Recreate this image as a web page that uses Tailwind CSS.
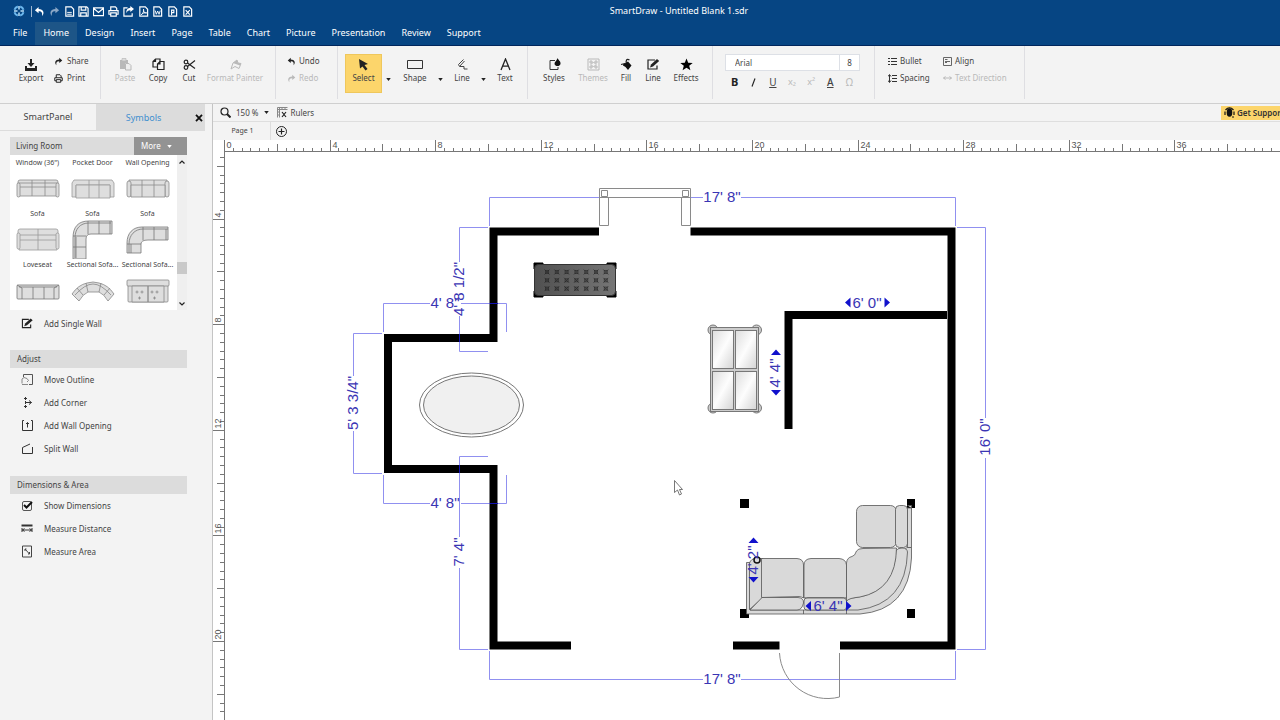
<!DOCTYPE html>
<html lang="en">
<head>
    <meta charset="UTF-8">
    <meta name="viewport" content="width=device-width, initial-scale=1.0">
    <title>SmartDraw - Untitled Blank 1.sdr</title>
    <script src="https://cdn.jsdelivr.net/npm/@tailwindcss/browser@4"></script>
</head>
<body class="flex h-screen flex-col overflow-hidden bg-[#f3f3f3] font-['Noto_Sans','Open_Sans',sans-serif] text-[8px] leading-3 text-[#444]">

    <!-- Shared icons -->
    <svg class="hidden">
        <symbol id="undo" viewBox="0 0 12 12"><path d="M5 1 L1 4.500 L5 8 V5.700 C8.500 5.600 9.300 7.500 8.800 11 C11.800 7.500 10.500 3.300 5 3.200Z" fill="currentColor"/></symbol>
        <symbol id="share" viewBox="0 0 12 12"><path d="M7 1 L11 4.500 L7 8 V5.700 C3.500 5.600 2.700 7.500 3.200 11 C.2 7.500 1.500 3.300 7 3.200Z" fill="currentColor"/></symbol>
        <symbol id="print" viewBox="0 0 12 12"><path d="M3 5V1h5l1.500 1.500V5M3 9H1V5h10v4H9M3 7.500h6V11H3z" fill="none" stroke="currentColor" stroke-width="1.300"/></symbol>
        <symbol id="doc" viewBox="0 0 12 12"><path d="M2 1h6l2.500 2.500V11H2z" fill="none" stroke="currentColor" stroke-width="1.300"/></symbol>
        <symbol id="edit" viewBox="0 0 14 12"><path d="M9 1.500H2v9h9V7" fill="none" stroke="currentColor" stroke-width="1.200"/><path d="M4 9l1-3 6-5.500 2.200 2L7 8z" fill="currentColor"/></symbol>
        <symbol id="caret" viewBox="0 0 6 4"><path d="M0 0h6L3 4z" fill="currentColor"/></symbol>
    </svg>

    <header class="border-b border-[#00265c] bg-[#064583] text-[9px] text-white">
        <div class="relative flex h-[22px] items-center pl-[13px]">
            <svg class="size-3" viewBox="0 0 12 12"><g fill="none" stroke="#6db8ee" stroke-width="2"><path d="M1.500 4.800A4.700 4.700 0 0 1 4.800 1.500"/><path d="M7.200 1.500A4.700 4.700 0 0 1 10.500 4.800"/><path d="M10.500 7.200A4.700 4.700 0 0 1 7.200 10.500"/><path d="M4.800 10.500A4.700 4.700 0 0 1 1.500 7.200"/></g><path d="M6 1v3.500M6 7.500V11M1 6h3.500M7.500 6H11" stroke="#b9def8" stroke-width="1.500"/></svg>
            <span class="ml-[6px] h-[11px] w-px bg-[#9db6d0]"></span>
            <div class="ml-[2px] flex w-[159px] justify-between">
                <button aria-label="Undo"><svg class="size-[11px]"><use href="#undo"/></svg></button>
                <button aria-label="Redo" class="text-[#8ba7c6]"><svg class="size-[11px]"><use href="#share"/></svg></button>
                <button aria-label="New"><svg class="size-[11px]" viewBox="0 0 12 12"><use href="#doc"/><path d="M3.500 7h5M3.500 9h5" stroke="#fff"/></svg></button>
                <button aria-label="Save"><svg class="size-[11px]" viewBox="0 0 12 12" fill="none" stroke="#fff" stroke-width="1.300"><path d="M1 1h8.500L11 2.500V11H1zM3 11V7.500h6V11M3.500 1v3.500h5V1"/></svg></button>
                <button aria-label="Mail"><svg class="size-[11px]" viewBox="0 0 12 12" fill="none" stroke="#fff" stroke-width="1.200"><path d="M.6 2h10.800v8.500H.6zM.6 2.500L6 7l5.400-4.500"/></svg></button>
                <button aria-label="Print"><svg class="size-[11px]"><use href="#print"/></svg></button>
                <button aria-label="Share"><svg class="size-[11px]" viewBox="0 0 12 12"><path d="M5 2H1v9h9V8" fill="none" stroke="#fff" stroke-width="1.300"/><path d="M8 0l4 3.200-4 3.300V4.500C5.500 4.500 4.500 5.500 3.500 8 3.500 4 5 2.200 8 2z" fill="#fff"/></svg></button>
                <button aria-label="Export PDF"><svg class="size-[11px]" viewBox="0 0 12 12"><use href="#doc"/><path d="M3.500 9.500C6 8 6.500 5 6 3.500 5.500 6 7 8 9.500 7.500 7 7 5 8 3.500 9.500" fill="none" stroke="#fff"/></svg></button>
                <button aria-label="Export Word"><svg class="size-[11px]" viewBox="0 0 12 12"><use href="#doc"/><path d="M3.500 5l1.200 4L6.200 5.500 7.700 9l1.300-4" fill="none" stroke="#fff"/></svg></button>
                <button aria-label="Export PowerPoint"><svg class="size-[11px]" viewBox="0 0 12 12"><use href="#doc"/><path d="M5 10V4.500h2.500v2.700H5" fill="none" stroke="#fff" stroke-width="1.200"/></svg></button>
                <button aria-label="Export Excel"><svg class="size-[11px]" viewBox="0 0 12 12"><use href="#doc"/><path d="M4 4.500l4.500 5M8.500 4.500L4 9.500" fill="none" stroke="#fff" stroke-width="1.200"/></svg></button>
            </div>
            <h1 class="pointer-events-none absolute inset-x-0 pl-[78px] text-center">SmartDraw - Untitled Blank 1.sdr</h1>
        </div>
        <nav class="flex h-[23px] items-stretch pl-[5px] leading-[22px]">
            <a href="#" class="px-2">File</a>
            <a href="#" class="bg-[#1d5587] px-2">Home</a>
            <a href="#" class="px-2">Design</a>
            <a href="#" class="px-2">Insert</a>
            <a href="#" class="px-2">Page</a>
            <a href="#" class="px-2">Table</a>
            <a href="#" class="px-2">Chart</a>
            <a href="#" class="px-2">Picture</a>
            <a href="#" class="px-2">Presentation</a>
            <a href="#" class="px-2">Review</a>
            <a href="#" class="px-2">Support</a>
        </nav>
    </header>

    <!-- Ribbon -->
    <div class="flex h-[58px] shrink-0 whitespace-nowrap border-b border-[#cfcfcf] pb-1">
        <div class="flex w-[101px] border-r border-[#dedee2]">
            <button class="ml-[14px] flex w-[34px] flex-col items-center gap-px pt-3"><svg class="h-[13px] w-3 text-[#222]" viewBox="0 0 12 13"><path d="M6 1v5M1 8v4h10V8" fill="none" stroke="currentColor" stroke-width="2"/><path d="M2.500 5h7L6 9z" fill="currentColor"/><path d="M1 10h10v2.500H1z" fill="currentColor"/></svg>Export</button>
            <div class="ml-[6px] flex flex-col gap-[5px] pt-[9px]">
                <button class="flex items-center gap-1"><svg class="size-[9px] text-[#222]"><use href="#share"/></svg>Share</button>
                <button class="flex items-center gap-1"><svg class="size-[9px] text-[#222]"><use href="#print"/></svg>Print</button>
            </div>
        </div>
        <div class="flex w-[175px] border-r border-[#dedee2] pl-[7px]">
            <button class="flex w-[34px] flex-col items-center gap-px pt-3 text-[#b9b9b9]"><svg class="size-[13px]" viewBox="0 0 13 13"><path d="M1 2h8v3H6v6H1z" fill="currentColor"/><path d="M3 .5h4V3H3z" fill="#ddd" stroke="currentColor" stroke-width=".7"/><path d="M6.500 5.500h3.500l2 2V12H6.500z" fill="#eee" stroke="currentColor"/></svg>Paste</button>
            <button class="flex w-8 flex-col items-center gap-px pt-3"><svg class="size-[13px] text-[#222]" viewBox="0 0 13 13" fill="#f3f3f3" stroke="currentColor" stroke-width="1.200"><path d="M3.500 1H8v8H1V3.500zM3.500 1v2.500H1"/><path d="M8 3.500h4v8H5.500V6zM8 3.500V6H5.500"/></svg>Copy</button>
            <button class="flex w-[30px] flex-col items-center gap-px pt-3"><svg class="size-[13px] text-[#222]" viewBox="0 0 13 13" fill="none" stroke="currentColor" stroke-width="1.200"><circle cx="3" cy="4" r="1.800"/><circle cx="3" cy="9.500" r="1.800"/><path d="M4.500 5L12 10.500M4.500 8.500L12 2.500"/></svg>Cut</button>
            <button class="flex w-[62px] flex-col items-center gap-px pt-3 text-[#b9b9b9]"><svg class="size-[13px]" viewBox="0 0 13 13"><path d="M2 11l2-6 4-3 1 3 3 .5-2 5-4-2z" fill="none" stroke="currentColor"/><path d="M4 5l4-3 1 3 3 .5-1 2z" fill="currentColor"/></svg>Format Painter</button>
        </div>
        <div class="flex w-[62px] flex-col items-start gap-[5px] border-r border-[#dedee2] pl-[11px] pt-[9px]">
            <button class="flex items-center gap-[3px]"><svg class="size-[9px] text-[#222]"><use href="#undo"/></svg>Undo</button>
            <button class="flex items-center gap-[3px] text-[#b9b9b9]"><svg class="size-[9px]"><use href="#share"/></svg>Redo</button>
        </div>
        <div class="flex w-[190px] items-start border-r border-[#dedee2] pl-[7px] pt-2">
            <button class="flex h-[39px] w-[37px] flex-col items-center gap-px border border-[#efc75c] bg-[#fcd56b] pt-[3px]"><svg class="size-[13px]" viewBox="0 0 13 13"><path d="M2 1l9 5-3.500 1 3 4-2 1.500-3-4-2.500 2z" fill="#222"/></svg>Select</button>
            <button aria-label="Select options" class="flex h-[39px] w-3 justify-center pt-6"><svg class="h-[3px] w-[5px] text-[#222]"><use href="#caret"/></svg></button>
            <button class="flex w-[42px] flex-col items-center gap-px pt-1"><svg class="h-[13px] w-4" viewBox="0 0 16 13"><path d="M.5 2.500h15v8H.5z" fill="none" stroke="#333"/></svg>Shape</button>
            <button aria-label="Shape options" class="flex h-[39px] w-[9px] justify-center pt-6"><svg class="h-[3px] w-[5px] text-[#222]"><use href="#caret"/></svg></button>
            <button class="flex w-[34px] flex-col items-center gap-px pt-1"><svg class="size-[13px]" viewBox="0 0 13 13"><path d="M7.500 1.500l-5 5 1 2 5-5.500M4 8.500h4v2.500h3.500" fill="none" stroke="#444"/></svg>Line</button>
            <button aria-label="Line options" class="flex h-[39px] w-[9px] justify-center pt-6"><svg class="h-[3px] w-[5px] text-[#222]"><use href="#caret"/></svg></button>
            <button class="flex w-[34px] flex-col items-center gap-px pt-1"><svg class="size-[13px]" viewBox="0 0 13 13"><path d="M2 12L6.500 1 11 12M3.600 8.200h5.800" fill="none" stroke="#222" stroke-width="1.300"/></svg>Text</button>
        </div>
        <div class="flex w-[185px] border-r border-[#dedee2] pl-[6px]">
            <button class="flex w-10 flex-col items-center gap-px pt-3"><svg class="size-[13px]" viewBox="0 0 13 13"><path d="M7 2.500H2v9h8V9" fill="none" stroke="#333"/><path d="M9.500 0C10 2 13 3 12.500 6 12 8.500 7.500 9 6.500 6 6.300 4 9 2.500 9.500 0" fill="#111"/></svg>Styles</button>
            <button class="flex w-[38px] flex-col items-center gap-px pt-3 text-[#b9b9b9]"><svg class="size-[13px]" viewBox="0 0 13 13" fill="none" stroke="currentColor"><path d="M1 1h11v11H1z"/><path d="M3 3h2v2H3zM8 3h2v2H8zM3 8h2v2H3zM8 8h2v2H8z"/><path d="M6.500 4L9 6.500 6.500 9 4 6.500z"/></svg>Themes</button>
            <button class="flex w-7 flex-col items-center gap-px pt-3"><svg class="size-[13px]" viewBox="0 0 13 13"><path d="M9.500 2C6.500 0 5.500 3 6.500 6M1 6.500l4-1" fill="none" stroke="#222" stroke-width="1.200"/><path d="M3 6.500l5-3 3.500 4L8 12 5.500 9 3 7.500z" fill="#111"/></svg>Fill</button>
            <button class="flex w-[26px] flex-col items-center gap-px pt-3"><svg class="h-[13px] w-[14px] text-[#222]"><use href="#edit"/></svg>Line</button>
            <button class="flex w-10 flex-col items-center gap-px pt-3"><svg class="size-[13px]" viewBox="0 0 13 13"><path d="M6.500.5l1.700 4.200 4.500.3-3.500 2.800L10.400 12.200 6.500 9.800 2.600 12.200l1.200-4.400L.3 5l4.500-.3z" fill="#000"/></svg>Effects</button>
        </div>
        <div class="w-[162px] border-r border-[#dedee2] pl-3 pt-2">
            <div class="flex">
                <input aria-label="Font" value="Arial" class="h-[17px] w-[115px] border border-[#dde0e6] bg-white px-[9px]">
                <input aria-label="Font size" value="8" class="-ml-px h-[17px] w-[21px] border border-[#dde0e6] bg-white text-center">
            </div>
            <div class="flex w-[134px] items-center pt-[5px] text-[10px] *:min-w-0 *:flex-1 *:text-center">
                <button class="text-[11px] font-bold text-[#222]">B</button>
                <button aria-label="Italic"><svg class="mx-auto size-[9px]" viewBox="0 0 9 9"><path d="M6 .5L3 8.500" stroke="#222" stroke-width="1.200"/></svg></button>
                <button class="underline">U</button>
                <button class="text-[9px] text-[#b9b9b9]">x₂</button>
                <button class="text-[9px] text-[#b9b9b9]">x²</button>
                <button class="font-medium underline">A</button>
                <button class="text-[#b9b9b9]">Ω</button>
            </div>
        </div>
        <div class="flex w-[150px] border-r border-[#dedee2] pl-[13px] pt-[9px]">
            <div class="flex w-[55px] flex-col items-start gap-[5px]">
                <button class="flex items-center gap-[3px]"><svg class="size-[9px]" viewBox="0 0 9 9"><path d="M0 1.500h2M3 1.500h6M0 4.500h2M3 4.500h6M0 7.500h2M3 7.500h6" stroke="#333"/></svg>Bullet</button>
                <button class="flex items-center gap-[3px]"><svg class="size-[9px]" viewBox="0 0 9 9"><path d="M4 1.500h5M4 4.500h5M4 7.500h5M1.500 1v7M0 2.500L1.500.5 3 2.500M0 6.500l1.500 2 1.500-2" fill="none" stroke="#333"/></svg>Spacing</button>
            </div>
            <div class="flex flex-col items-start gap-[5px]">
                <button class="flex items-center gap-[3px]"><svg class="size-[9px]" viewBox="0 0 9 9"><path d="M.5.500h8v8h-8zM2 2.500h2.500M2 4.500h5M2 5.500h2" fill="none" stroke="#666"/></svg>Align</button>
                <button class="flex items-center gap-[3px] text-[#b9b9b9]"><svg class="size-[9px]" viewBox="0 0 9 9"><path d="M.5 4h8M2.500 2.500L.5 4l2 1.500M6.500 2.500l2 1.500-2 1.500" fill="none" stroke="currentColor"/></svg>Text Direction</button>
            </div>
        </div>
    </div>

    <main class="flex min-h-0 flex-1">
        <!-- Side panel -->
        <aside class="w-[213px] shrink-0 border-r border-[#c4c4c4] pr-[7px]">
            <div class="flex h-[27px] text-[9px]">
                <button class="w-24 border-b border-[#dcdcdc]">SmartPanel</button>
                <button class="w-[95px] bg-[#dcdcdc] text-[#3f8fcf]">Symbols</button>
                <button aria-label="Close panel" class="flex flex-1 items-center bg-[#dcdcdc]"><svg class="ml-1 size-2" viewBox="0 0 8 8"><path d="M1 .8l6 6.400M7 .8L1 7.200" stroke="#111" stroke-width="1.800"/></svg></button>
            </div>
            <div class="mt-[6px] ml-[10px] w-[177px]">
                <div class="flex h-[18px] items-center bg-[#dcdcdc] pl-[6px]">
                    <span class="flex-1">Living Room</span>
                    <button class="flex h-[18px] w-[53px] items-center gap-[6px] bg-[#939393] pl-[7px] text-white">More <svg class="h-[3px] w-[5px]"><use href="#caret"/></svg></button>
                </div>
                <div class="flex h-[155px] bg-white">
                    <div class="grid w-[167px] auto-rows-min grid-cols-[55px_55px_55px] justify-items-center pt-[2px] text-[7px]">
                        <span class="h-3">Window (36")</span>
                        <span class="h-3">Pocket Door</span>
                        <span class="h-3">Wall Opening</span>
                        <svg class="h-[39px] w-[44px]" viewBox="0 0 44 39" fill="#dedede" stroke="#8a8a8a" stroke-width=".8"><rect x="2" y="11" width="40" height="8" rx="2"/><rect x="3" y="14" width="38" height="13"/><path d="M16 11v16M29 11v16M4 18h36"/><rect x="1" y="14" width="3" height="14" rx="1.500"/><rect x="40" y="14" width="3" height="14" rx="1.500"/></svg>
                        <svg class="h-[39px] w-[44px]" viewBox="0 0 44 39" fill="#dedede" stroke="#999" stroke-width=".8"><path d="M3 11h38l2 3v14h-4V16H5v12H1V14z"/><path d="M5 16h34v13H5zM18 11v18M28 11v18"/></svg>
                        <svg class="h-[39px] w-[44px]" viewBox="0 0 44 39" fill="#dedede" stroke="#8a8a8a" stroke-width=".8"><path d="M3 11h38v6H3z"/><rect x="1" y="12" width="4" height="16" rx="2"/><rect x="39" y="12" width="4" height="16" rx="2"/><path d="M5 16h34v12H5zM16 11v17M28 11v17"/></svg>
                        <span class="h-3">Sofa</span>
                        <span class="h-3">Sofa</span>
                        <span class="h-3">Sofa</span>
                        <svg class="h-[39px] w-[44px]" viewBox="0 0 44 39" fill="#dedede" stroke="#999" stroke-width=".8"><rect x="2" y="9" width="40" height="10" rx="2"/><path d="M3 15h38v15H3zM22 9v21M3 20h38"/><rect x="1" y="13" width="3" height="16" rx="1.500"/><rect x="40" y="13" width="3" height="16" rx="1.500"/></svg>
                        <svg class="h-[39px] w-[44px]" viewBox="0 0 44 39" fill="#dedede" stroke="#777" stroke-width=".8"><path d="M2 39V18C2 7 7 1 18 1h23v13H20q-5 0-5 5v20z"/><path d="M4 38V18C4 9 9 3 18 3h22M17 1v13M28 1v13M39 1v13M2 16h13M2 27h13M5 17v21" fill="none"/></svg>
                        <svg class="h-[39px] w-[44px]" viewBox="0 0 44 39" fill="#dedede" stroke="#777" stroke-width=".8"><path d="M1 33V23C1 13 7 7 16 7h26v13H22q-7 0-7 4v9z"/><path d="M3 33V24C3 15 9 9 17 9h25M17 7v13M28 7v13M40 9v11M1 24h14M5 24v9" fill="none"/></svg>
                        <span class="h-3">Loveseat</span>
                        <span class="h-3">Sectional Sofa...</span>
                        <span class="h-3">Sectional Sofa...</span>
                        <svg class="h-[39px] w-[44px]" viewBox="0 0 44 39" fill="#dedede" stroke="#777" stroke-width=".8"><rect x="1" y="14" width="42" height="14" rx="1"/><path d="M3 16h38M17 16v12M28 16v12M6 17v11M38 17v11M1 14l5 3M43 14l-5 3" fill="none"/></svg>
                        <svg class="h-[39px] w-[44px]" viewBox="0 0 44 39" fill="#dedede" stroke="#888" stroke-width=".8"><path d="M1 23Q7 14 16 12Q22 10 28 12Q37 14 43 23l-6 7Q33 23 28 21H17Q12 23 8 30z"/><path d="M4 24Q14 13 22 13Q30 13 40 24M17 21l-2-9M28 21l2-9M12 24l-6-7M33 24l6-7" fill="none"/></svg>
                        <svg class="h-[39px] w-[44px]" viewBox="0 0 44 39" fill="#dedede" stroke="#888" stroke-width=".8"><rect x="2" y="14" width="40" height="17" rx="1"/><rect x="1" y="9" width="42" height="6" rx="1"/><path d="M6 15h16v16H6zM22 15h16v16H22z"/><path d="M11 19.500v3M16 19.500v3M13.500 25.500v3M26 19.500v3M31 19.500v3M28.500 25.500v3M9.500 21h3M14.500 21h3M12 27h3M24.500 21h3M29.500 21h3M27 27h3"/></svg>
                    </div>
                    <div class="flex w-[10px] flex-col items-center bg-[#efefef] pt-[5px] pb-[4px]">
                        <svg class="h-1 w-[6px]" viewBox="0 0 6 4"><path d="M.5 3.500L3 1l2.500 2.500" fill="none" stroke="#222" stroke-width="1.200"/></svg>
                        <div class="mt-[98px] h-3 w-[10px] bg-[#c9c9c9]"></div>
                        <svg class="mt-auto h-1 w-[6px]" viewBox="0 0 6 4"><path d="M.5.500L3 3 5.500.5" fill="none" stroke="#222" stroke-width="1.200"/></svg>
                    </div>
                </div>
                <button class="mt-[2px] flex h-[23px] w-full items-center gap-[10px] pl-[10px]"><svg class="h-[11px] w-[14px] text-[#222]"><use href="#edit"/></svg>Add Single Wall</button>

                <h2 class="mt-[15px] h-[18px] bg-[#dcdcdc] pt-[3px] pl-[7px]">Adjust</h2>
                <button class="flex h-[23px] w-full items-center gap-[10px] pl-[10px]"><svg class="h-[13px] w-[14px]" viewBox="0 0 14 13" fill="none" stroke="#555"><path d="M3.500 4V1.500h9v10H9"/><path d="M2 11.500h6M2 10.500V6l2-1.500 3 1 1.500 2-1.500 1.500" stroke="#888"/></svg>Move Outline</button>
                <button class="flex h-[23px] w-full items-center gap-[10px] pl-[10px]"><svg class="h-[13px] w-[14px]" viewBox="0 0 14 13" fill="none" stroke="#333"><path d="M5.500 1v11" stroke-dasharray="3 1"/><path d="M5.500 6.500h6M9 4.500l2.500 2-2.500 2M4 2.500h3M4 10.500h3"/></svg>Add Corner</button>
                <button class="flex h-[23px] w-full items-center gap-[10px] pl-[10px]"><svg class="h-[13px] w-[14px]" viewBox="0 0 14 13" fill="none" stroke="#333"><path d="M4 1.500H2.500v10h10v-10H11M7.500 8.500V3.500M6 5l1.500-1.500L9 5"/></svg>Add Wall Opening</button>
                <button class="flex h-[23px] w-full items-center gap-[10px] pl-[10px]"><svg class="h-[13px] w-[14px]" viewBox="0 0 14 13" fill="none" stroke="#333"><path d="M10 2L2.500 5.500v6h10V5"/></svg>Split Wall</button>

                <h2 class="mt-4 h-[18px] bg-[#dcdcdc] pt-[3px] pl-[7px]">Dimensions &amp; Area</h2>
                <label class="flex h-[23px] w-full items-center gap-[10px] pl-[10px]">
                    <span class="relative flex h-[11px] w-[14px] items-center justify-center">
                        <input type="checkbox" checked class="size-[10px] appearance-none rounded-xs border border-[#555]">
                        <svg class="pointer-events-none absolute h-[10px] w-3" viewBox="0 0 12 10"><path d="M3 4l2.500 2.500L11 1" fill="none" stroke="#111" stroke-width="2"/></svg>
                    </span>Show Dimensions</label>
                <button class="flex h-[23px] w-full items-center gap-[10px] pl-[10px]"><svg class="h-[13px] w-[14px]" viewBox="0 0 14 13" fill="none" stroke="#333"><path d="M1.500 3.500h11" stroke-width="2"/><path d="M2 8h10M2 6v4M12 6v4M4.500 6.500L2.500 8l2 1.500M9.500 6.500l2 1.500-2 1.500"/></svg>Measure Distance</button>
                <button class="flex h-[23px] w-full items-center gap-[10px] pl-[10px]"><svg class="h-[13px] w-[14px]" viewBox="0 0 14 13" fill="none" stroke="#444"><path d="M2.500 1h9v11h-9zM5 4l4.500 5M5 6V4h1.500M9.500 7v2H8"/></svg>Measure Area</button>
            </div>
        </aside>

        <!-- Canvas -->
        <section class="flex min-w-0 flex-1 flex-col">
            <div class="flex h-[18px] shrink-0 items-center overflow-hidden whitespace-nowrap border-b border-[#dedede] pl-[7px]">
                <svg class="size-[11px]" viewBox="0 0 11 11" fill="none" stroke="#222"><circle cx="4.500" cy="4.500" r="3.500" stroke-width="1.200"/><path d="M7 7l3.500 3.500" stroke-width="2"/></svg>
                <button class="ml-[5px] flex items-center gap-[6px]">150 % <svg class="h-[3px] w-[5px] text-[#222]"><use href="#caret"/></svg></button>
                <button class="ml-[8px] flex items-center gap-[2px]"><svg class="size-[11px]" viewBox="0 0 11 11" fill="none" stroke="#888"><path d="M.5 10.500V.5h10M2.500.5v10M.5 2.500h10M.5 5h2M.5 8h2M5 .5v2M8 .5v2"/><path d="M5 5l4 5M9 5l-4 5" stroke="#222" stroke-width="1.200"/></svg>Rulers</button>
                <button class="ml-auto flex h-[14px] items-center gap-[2px] bg-[#fcd56b] pl-[3px] text-[8px] font-semibold text-[#333] -mr-1"><svg class="size-[11px]" viewBox="0 0 11 11"><ellipse cx="5.500" cy="5.500" rx="2.800" ry="4.300" fill="#111"/><path d="M1 8V4.500M10 8V4.500M1.500 3Q5.500-1.500 9.500 3M8 10h2" fill="none" stroke="#111" stroke-width="1.200"/></svg>Get Support</button>
            </div>
            <div class="flex h-[18px] shrink-0 items-center">
                <button class="h-full w-[58px] border-r border-[#dedede] pl-[2px] text-[7px]">Page 1</button>
                <button aria-label="Add page" class="ml-[5px]"><svg class="size-[11px]" viewBox="0 0 11 11" fill="none" stroke="#222"><circle cx="5.500" cy="5.500" r="5"/><path d="M5.500 2.500v6M2.500 5.500h6" stroke-width="1.200"/></svg></button>
            </div>
            <div class="h-3 shrink-0 bg-white pl-[11px]">
                <svg id="ruler-x" class="h-3 w-full border-b border-l border-[#777] font-['Liberation_Sans',sans-serif]"></svg>
            </div>
            <div class="flex min-h-0 flex-1 bg-white">
                <svg id="ruler-y" class="h-full w-3 shrink-0 border-r border-[#777] font-['Liberation_Sans',sans-serif]"></svg>
                <svg class="h-full min-w-0 flex-1 font-['Liberation_Sans',sans-serif]" role="img" aria-label="Floor plan">
                    <defs>
                        <linearGradient id="glass" x1="0" y1="0" x2="1" y2="1"><stop offset="0" stop-color="#ddd"/><stop offset=".5" stop-color="#fdfdfd"/><stop offset="1" stop-color="#d4d4d4"/></linearGradient>
                        <linearGradient id="leather"><stop offset="0" stop-color="#505050"/><stop offset="1" stop-color="#767676"/></linearGradient>
                        <path id="tuft" d="M-2.500 -2.500L2.500 2.500M2.500 -2.500L-2.500 2.500M-1.500 -1.500h3v3h-3z" fill="none" stroke="#222" stroke-width=".6"/>
                    </defs>
                    <g transform="translate(-225 -152)">
                        <!-- walls -->
                        <path d="M599 231.500H493.500V338H388V469H493.500V645.500H571M733 645.500H779.500M840 645.500H951.500V231.500H690.500M947 315H788.500V429" fill="none" stroke="#000" stroke-width="8"/>

                        <!-- dimension lines -->
                        <g fill="none" stroke="#9090f0">
                            <path d="M489.500 226V197.500H703M741 197.500H955.500V226"/>
                            <path d="M957 227.500H985.500V418M985.500 458V649.500H957"/>
                            <path d="M489.500 651V679.500H703M741 679.500H955.500V651"/>
                            <path d="M488 227.500H459.500V262M459.500 316V351.500H488"/>
                            <path d="M383.500 332V303.500H430M461 303.500H506.500V332"/>
                            <path d="M382 333.500H353.500V376M353.500 431V473.500H382"/>
                            <path d="M383.500 475V503.500H430M461 503.500H506.500V475"/>
                            <path d="M488 456.500H459.500V537M459.500 568V649.500H488"/>
                        </g>
                        <path d="M489.500 303.500H498M489.500 503.500H498M459.500 334V342M459.500 465V473" stroke="#1010b0"/>

                        <!-- window seat and door -->
                        <g fill="none" stroke="#8a8a8a">
                            <path d="M599.500 188.500H690.500V197.500H599.500zM599.500 197.500H608.500V225.500H599.500zM681.500 197.500H690.500V225.500H681.500zM601.500 190.500H607.500V196.500H601.500zM682.500 190.500H688.500V196.500H682.500z"/>
                            <path d="M779.500 653A48 48 0 0 0 839.500 697V653"/>
                        </g>

                        <!-- ottoman -->
                        <path d="M534 263h9v6h-9zM607 263h9v6h-9zM534 291h9v6h-9zM607 291h9v6h-9z" fill="#000" stroke="#000" stroke-linejoin="round"/>
                        <rect x="534.500" y="264.500" width="81" height="31" rx="4" fill="url(#leather)" stroke="#333"/>
                        <g id="tufts"></g>

                        <!-- glass table -->
                        <g stroke="#777" fill="#ccc">
                            <circle cx="713" cy="330" r="5"/><circle cx="756.500" cy="330" r="5"/><circle cx="713" cy="408" r="5"/><circle cx="756.500" cy="408" r="5"/>
                            <rect x="710.500" y="327.500" width="48" height="84"/>
                            <g fill="url(#glass)"><rect x="712.500" y="330.500" width="21" height="38"/><rect x="735.500" y="330.500" width="21" height="38"/><rect x="712.500" y="371.500" width="21" height="38"/><rect x="735.500" y="371.500" width="21" height="38"/></g>
                        </g>

                        <!-- oval table -->
                        <ellipse cx="471.500" cy="405" rx="52" ry="32" fill="#fff" stroke="#777"/>
                        <ellipse cx="471.500" cy="405" rx="48" ry="29" fill="#f0f0f0" stroke="#777"/>

                        <!-- sectional sofa -->
                        <path d="M740 499h9v9h-9zM907 499h8v9h-8zM740 609h9v9h-9zM907 609h8v9h-8z"/>
                        <g fill="#d9d9d9" stroke="#555" stroke-width=".8">
                            <path d="M746.500 562.500V614H860Q909 610 911.500 558V547.500H907L847 597V610H750V562.500z"/>
                            <path d="M749.500 609.500V563Q751 558.500 756 558.500H763V597.500z"/>
                            <path d="M762 597.500H798Q804 598 803.500 603Q802 610 797 610H750z"/>
                            <rect x="804" y="598" width="42.500" height="12" rx="3"/>
                            <path d="M846.500 601Q848 598 856 597.500Q894 592 896 551Q897 548 902 548Q907 548 907.500 552Q906 604 858 610H846.500z"/>
                            <path d="M761.500 597.500V558.500H797Q803.500 559 803.500 565V598Q802 597 799 596.500z"/>
                            <path d="M804 598V565Q804 559 811 558.500H839Q846 559 846.500 565V598Q845 597.500 841 597.500H809Q806 597.500 804 598z"/>
                            <path d="M846.500 601V563Q847 557.500 852 556.500Q855 556 856.500 551Q858 548.500 863 548.500L896.500 548Q896 590 860 597Q849 598 846.500 601z"/>
                            <rect x="856.500" y="505.500" width="40" height="42" rx="6"/>
                            <rect x="895.500" y="505.500" width="12" height="42" rx="4"/>
                            <path d="M907.500 508h4v39.500h-4zM907.500 505.500h4v2.500M803.500 610v4M846.500 610v4"/>
                        </g>
                        <circle cx="757" cy="560" r="3" fill="#ddd" stroke="#111" stroke-width="1.500"/>

                        <!-- resize arrows -->
                        <path d="M850.500 297.500v10l-5.500-5zM884.500 297.500v10l5.500-5zM771 355h10l-5-5.500zM771 390h10l-5 5.500zM748.500 543h10l-5-5.500zM748.500 577h10l-5 5.500zM811 601v10l-5.500-5zM846 601v10l5.500-5z" fill="#1111cc"/>

                        <!-- dimension labels -->
                        <g class="text-[15px]" fill="#3a35b4" text-anchor="middle">
                            <text x="722" y="202">17' 8"</text>
                            <text x="722" y="684">17' 8"</text>
                            <text x="445" y="308">4' 8"</text>
                            <text x="445" y="508">4' 8"</text>
                            <text x="867" y="308">6' 0"</text>
                            <text x="828" y="611">6' 4"</text>
                            <text transform="translate(464 289) rotate(-90)">4' 8 1/2"</text>
                            <text transform="translate(358 403) rotate(-90)">5' 3 3/4"</text>
                            <text transform="translate(464 552) rotate(-90)">7' 4"</text>
                            <text transform="translate(990 437) rotate(-90)">16' 0"</text>
                            <text transform="translate(780 373) rotate(-90)">4' 4"</text>
                            <text transform="translate(758 560) rotate(-90)">4' 2"</text>
                        </g>

                        <path d="M674.500 480.500V492.500L677.500 490L679.500 495L681.500 494L679.500 489.500H682.500z" fill="#fff" stroke="#555" stroke-width=".8"/>
                    </g>
                </svg>
            </div>
        </section>
    </main>

    <script>
        const NS = 'http://www.w3.org/2000/svg';
        const STEP = 8.8; // 4 inches at 150 %

        function add(parent, tag, attrs, text) {
            const el = document.createElementNS(NS, tag);
            for (const key in attrs) el.setAttribute(key, attrs[key]);
            if (text !== undefined) el.textContent = text;
            parent.appendChild(el);
        }

        // Horizontal ruler starts at 0 feet, right of the side panel
        const rulerX = document.getElementById('ruler-x');
        const width = window.innerWidth - 225;
        for (let i = 0; i * STEP < width; i++) {
            const x = Math.round(i * STEP) - 0.5;
            const len = i % 12 === 0 ? 11 : i % 6 === 0 ? 7 : 3;
            add(rulerX, 'path', { d: `M${x} 11v-${len}`, stroke: '#777' });
            if (i % 12 === 0) add(rulerX, 'text', { x: x + 2, y: 8, 'font-size': 9, fill: '#555' }, i / 3);
        }

        // Vertical ruler is scrolled by 1.5 feet, below the toolbars
        const rulerY = document.getElementById('ruler-y');
        const height = window.innerHeight - 152;
        for (let i = 5; i * STEP - 39 < height; i++) {
            const y = Math.round(i * STEP - 39) + 0.5;
            const len = i % 12 === 0 ? 11 : i % 6 === 0 ? 7 : 4;
            add(rulerY, 'path', { d: `M11 ${y}h-${len}`, stroke: '#777' });
            if (i % 12 === 0) add(rulerY, 'text', { transform: `translate(8 ${y - 2}) rotate(-90)`, 'font-size': 9, fill: '#555' }, i / 3);
        }

        const tufts = document.getElementById('tufts');
        for (let row = 0; row < 3; row++) {
            for (let col = 0; col < 7; col++) {
                add(tufts, 'use', { href: '#tuft', x: 547 + col * 9.8, y: 272 + row * 8.3 });
            }
        }
    </script>
</body>
</html>
